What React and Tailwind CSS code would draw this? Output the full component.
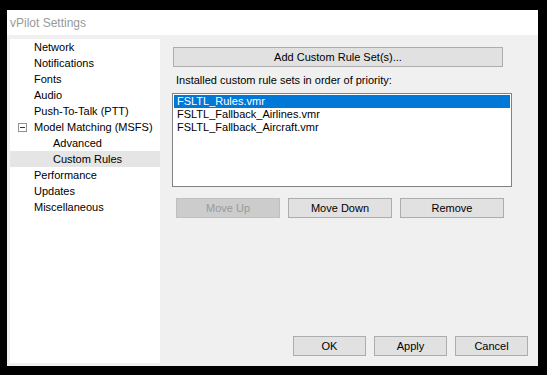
const font = { fontFamily: '"Liberation Sans", Arial, sans-serif' };

const TREE = [
  { label: 'Network', level: 0 },
  { label: 'Notifications', level: 0 },
  { label: 'Fonts', level: 0 },
  { label: 'Audio', level: 0 },
  { label: 'Push-To-Talk (PTT)', level: 0 },
  { label: 'Model Matching (MSFS)', level: 0, expander: true },
  { label: 'Advanced', level: 1 },
  { label: 'Custom Rules', level: 1, selected: true },
  { label: 'Performance', level: 0 },
  { label: 'Updates', level: 0 },
  { label: 'Miscellaneous', level: 0 },
];

const RULES = ['FSLTL_Rules.vmr', 'FSLTL_Fallback_Airlines.vmr', 'FSLTL_Fallback_Aircraft.vmr'];

function Button({ children, className = '', disabled }) {
  return (
    <div
      className={`h-[20px] flex items-center justify-center border text-[11px] leading-none ${
        disabled ? 'bg-[#cccccc] border-[#bfbfbf] text-[#9a9a9a]' : 'bg-[#e1e1e1] border-[#adadad] text-black'
      } ${className}`}
    >
      {children}
    </div>
  );
}

function TreeRow({ item }) {
  return (
    <div className={`relative h-[16px] flex items-center ${item.selected ? 'bg-[#e5e5e5]' : ''}`}>
      {item.expander && (
        <div className="absolute left-[8px] top-[4px] w-[9px] h-[9px] border border-[#919191] bg-white flex items-center justify-center">
          <div className="w-[5px] h-px bg-[#333333]" />
        </div>
      )}
      <span className={`text-[11px] text-black leading-none ${item.level ? 'pl-[43px]' : 'pl-[24px]'}`}>
        {item.label}
      </span>
    </div>
  );
}

export default function App() {
  return (
    <div className="w-[547px] h-[375px] bg-black overflow-hidden" style={font}>
      <div className="ml-[7px] mt-[10px] w-[531px] h-[356px] flex flex-col bg-[#f0f0f0]">
        <div className="h-[25px] bg-white flex items-center pl-[3px] pt-[1px]">
          <span className="text-[12px] text-[#999999]">vPilot Settings</span>
        </div>
        <div className="flex-1 flex">
          <div className="ml-[3px] mt-[4px] mb-[3px] w-[150px] bg-white">
            {TREE.map((item) => (
              <TreeRow key={item.label} item={item} />
            ))}
          </div>
          <div className="flex-1 flex flex-col">
            <Button className="ml-[13px] mt-[12px] w-[330px]">Add Custom Rule Set(s)...</Button>
            <div className="ml-[16px] mt-[6px] h-[14px] flex items-center text-[11px] text-black leading-none">
              Installed custom rule sets in order of priority:
            </div>
            <div className="ml-[12px] mt-[6px] w-[340px] h-[94px] bg-white border border-[#828282] p-px">
              {RULES.map((r, i) => (
                <div
                  key={r}
                  className={`h-[13px] flex items-center pl-[3px] text-[11px] leading-none ${
                    i === 0 ? 'bg-[#0078d7] text-white' : 'text-black'
                  }`}
                >
                  {r}
                </div>
              ))}
            </div>
            <div className="ml-[16px] mt-[11px] flex gap-[8px]">
              <Button disabled className="w-[104px]">Move Up</Button>
              <Button className="w-[104px]">Move Down</Button>
              <Button className="w-[104px]">Remove</Button>
            </div>
            <div className="flex-1" />
            <div className="flex justify-end gap-[8px] pr-[10px] pb-[10px]">
              <Button className="w-[73px]">OK</Button>
              <Button className="w-[73px]">Apply</Button>
              <Button className="w-[73px]">Cancel</Button>
            </div>
          </div>
        </div>
      </div>
    </div>
  );
}
